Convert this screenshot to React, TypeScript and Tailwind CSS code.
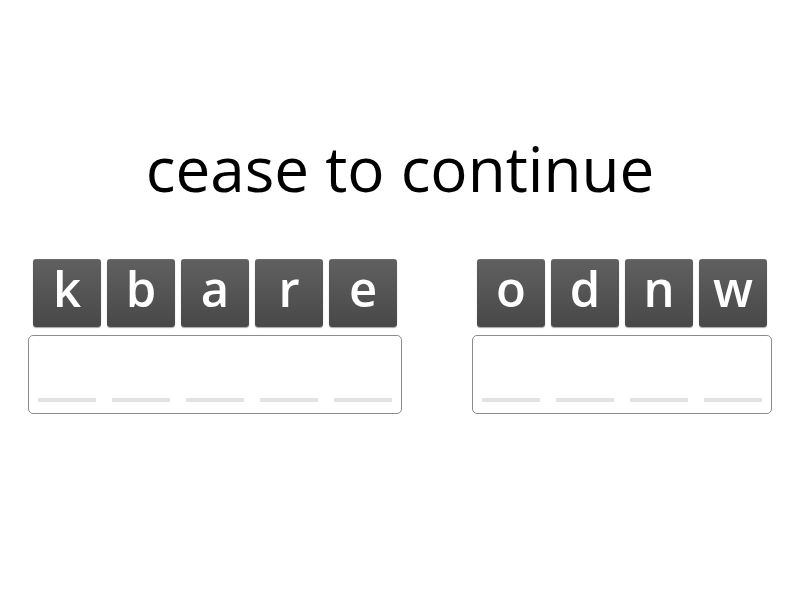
const GROUPS: string[][] = [
  ["k", "b", "a", "r", "e"],
  ["o", "d", "n", "w"],
];

function Tile({ ch }: { ch: string }) {
  return (
    <div className="flex h-[68px] w-[68px] items-center justify-center rounded-[3px] border-t border-[#6a6a6a] bg-gradient-to-b from-[#606060] to-[#484848] pb-[10px] text-[49px] font-semibold leading-none text-white shadow-[0_1px_1px_rgba(0,0,0,0.35)]">
      {ch}
    </div>
  );
}

function Word({ letters }: { letters: string[] }) {
  return (
    <div className="flex flex-col">
      <div className="flex gap-[6px] px-[5px]">
        {letters.map((c, i) => (
          <Tile key={i} ch={c} />
        ))}
      </div>
      <div className="mt-[8px] flex h-[79px] items-end gap-[16px] rounded-[5px] border border-[#8c8c8c] px-[9px] pb-[11px]">
        {letters.map((_, i) => (
          <div key={i} className="h-[4px] w-[58px] bg-[#e3e3e3]" />
        ))}
      </div>
    </div>
  );
}

export default function App() {
  return (
    <div
      className="flex h-[600px] w-[800px] flex-col items-center bg-white"
      style={{ fontFamily: '"Open Sans", sans-serif' }}
    >
      <div className="mt-[128px] text-[62px] leading-[80px] text-black">cease to continue</div>
      <div className="mt-[51px] flex gap-[70px]">
        {GROUPS.map((g, i) => (
          <Word key={i} letters={g} />
        ))}
      </div>
    </div>
  );
}
